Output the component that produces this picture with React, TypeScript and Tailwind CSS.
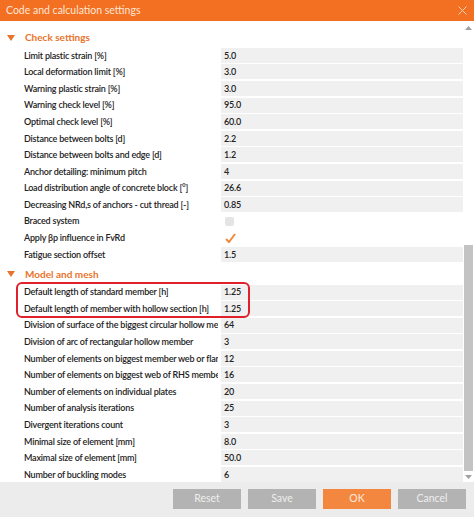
import React from 'react';

type Row = { label: string; value?: string; check?: 'off' | 'on' };

const checkRows: Row[] = [
  { label: 'Limit plastic strain [%]', value: '5.0' },
  { label: 'Local deformation limit [%]', value: '3.0' },
  { label: 'Warning plastic strain [%]', value: '3.0' },
  { label: 'Warning check level [%]', value: '95.0' },
  { label: 'Optimal check level [%]', value: '60.0' },
  { label: 'Distance between bolts [d]', value: '2.2' },
  { label: 'Distance between bolts and edge [d]', value: '1.2' },
  { label: 'Anchor detailing: minimum pitch', value: '4' },
  { label: 'Load distribution angle of concrete block [°]', value: '26.6' },
  { label: 'Decreasing NRd,s of anchors - cut thread [-]', value: '0.85' },
  { label: 'Braced system', check: 'off' },
  { label: 'Apply βp influence in FvRd', check: 'on' },
  { label: 'Fatigue section offset', value: '1.5' },
];

const meshRows: Row[] = [
  { label: 'Division of surface of the biggest circular hollow member', value: '64' },
  { label: 'Division of arc of rectangular hollow member', value: '3' },
  { label: 'Number of elements on biggest member web or flange', value: '12' },
  { label: 'Number of elements on biggest web of RHS member', value: '16' },
  { label: 'Number of elements on individual plates', value: '20' },
  { label: 'Number of analysis iterations', value: '25' },
  { label: 'Divergent iterations count', value: '3' },
  { label: 'Minimal size of element [mm]', value: '8.0' },
  { label: 'Maximal size of element [mm]', value: '50.0' },
  { label: 'Number of buckling modes', value: '6' },
];

const SettingRow: React.FC<{ row: Row }> = ({ row }) => (
  <div className="flex h-[16.6px] items-center">
    <div className="w-[221px] shrink-0 pl-[24px]">
      <span className="block w-[194px] overflow-hidden whitespace-nowrap text-[9px] font-semibold tracking-[-0.2px] text-[#222222]">
        {row.label}
      </span>
    </div>
    {row.check ? (
      <div className="flex h-[15px] flex-1 items-center pl-[4px]">
        {row.check === 'off' ? (
          <span className="block h-[9px] w-[9px] rounded-[2px] bg-[#e4e4e4]" />
        ) : (
          <svg width="11" height="10" viewBox="0 0 11 10">
            <path d="M1 6 L4 9 L10 1" fill="none" stroke="#f08a3c" strokeWidth="2" />
          </svg>
        )}
      </div>
    ) : (
      <div className="flex h-[15px] flex-1 items-center bg-[#f0f0f0] pl-[3px] text-[9px] font-semibold tracking-[-0.2px] text-[#222222]">
        {row.value}
      </div>
    )}
  </div>
);

const SectionHeader: React.FC<{ title: string }> = ({ title }) => (
  <div className="flex h-[19px] items-center">
    <svg className="ml-[7px]" width="8" height="6" viewBox="0 0 8 6">
      <path d="M0 0 L8 0 L4 6 Z" fill="#e8742c" />
    </svg>
    <span className="ml-[10px] text-[10px] font-bold text-[#e8742c]">{title}</span>
  </div>
);

const App: React.FC = () => {
  return (
    <div
      className="flex h-[517px] w-[474px] flex-col overflow-hidden bg-white"
      style={{ fontFamily: 'Lato, "Open Sans", sans-serif' }}
    >
      <div className="flex h-[21px] shrink-0 items-center justify-between bg-[#f36f21] pl-[6px] pr-[7px]">
        <span className="text-[10.5px] text-[#fde6d6]">Code and calculation settings</span>
        <svg width="9" height="9" viewBox="0 0 9 9">
          <path d="M0.5 0.5 L8.5 8.5 M8.5 0.5 L0.5 8.5" stroke="#fbd4b8" strokeWidth="1" />
        </svg>
      </div>

      <div className="flex min-h-0 flex-1">
        <div className="flex-1 pt-[7px]">
          <SectionHeader title="Check settings" />
          {checkRows.map((r) => (
            <SettingRow key={r.label} row={r} />
          ))}
          <div className="h-[2px]" />
          <SectionHeader title="Model and mesh" />
          <div className="relative">
            <div className="pointer-events-none absolute left-[16px] top-[-2px] h-[36px] w-[234px] rounded-[6px] border-2 border-[#e0202a]" />
            <SettingRow row={{ label: 'Default length of standard member [h]', value: '1.25' }} />
            <SettingRow row={{ label: 'Default length of member with hollow section [h]', value: '1.25' }} />
          </div>
          {meshRows.map((r) => (
            <SettingRow key={r.label} row={r} />
          ))}
        </div>

        <div className="flex w-[11px] shrink-0 flex-col items-center">
          <svg className="mt-[5px]" width="7" height="4" viewBox="0 0 7 4">
            <path d="M0 4 L3.5 0 L7 4 Z" fill="#a0a0a0" />
          </svg>
          <div className="flex-1" />
          <div className="h-[226px] w-[9px] bg-[#c3c3c3]" />
          <svg className="mb-[3px] mt-[4px]" width="7" height="4" viewBox="0 0 7 4">
            <path d="M0 0 L3.5 4 L7 0 Z" fill="#a0a0a0" />
          </svg>
        </div>
      </div>

      <div className="flex h-[35px] shrink-0 items-start justify-end gap-[7px] bg-[#ececec] pr-[8px] pt-[7px]">
        <button className="h-[20px] w-[68px] bg-[#b3b3b3] text-[10.5px] text-[#eeeeee]">Reset</button>
        <button className="h-[20px] w-[68px] bg-[#b3b3b3] text-[10.5px] text-[#eeeeee]">Save</button>
        <button className="h-[20px] w-[68px] bg-[#f4873f] text-[10.5px] text-[#fde9dc]">OK</button>
        <button className="h-[20px] w-[68px] bg-[#b3b3b3] text-[10.5px] text-[#eeeeee]">Cancel</button>
      </div>
    </div>
  );
};

export default App;
